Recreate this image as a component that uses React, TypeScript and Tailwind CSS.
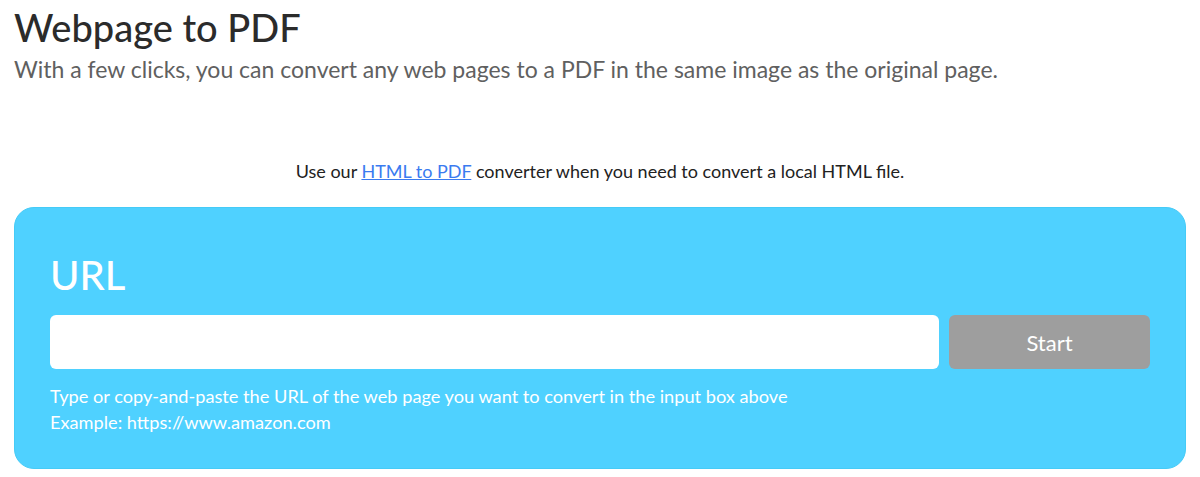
import React from 'react';

export default function App() {
  return (
    <div className="min-h-screen bg-white px-[14px] pt-[3px] pb-2 font-['Lato','Liberation_Sans',sans-serif]">
      <h1 className="text-[38px] leading-[48px] font-medium text-[#2b2b2b]">Webpage to PDF</h1>
      <p className="mt-[3px] text-[23px] leading-[30px] text-[#606060]">
        With a few clicks, you can convert any web pages to a PDF in the same image as the original page.
      </p>

      <p className="mt-[74px] text-center text-[18px] leading-[26px] text-[#222222]">
        Use our{' '}
        <a href="#" className="text-[#3a7bf0] underline">
          HTML to PDF
        </a>{' '}
        converter when you need to convert a local HTML file.
      </p>

      <div className="mt-[23px] h-[262px] rounded-[20px] border border-[#45cbf7] bg-[#4fd1ff] px-[35px] pt-[41px]">
        <h2 className="text-[40px] leading-[52px] font-medium text-white">URL</h2>
        <div className="mt-[14px] flex gap-[10px]">
          <input
            type="text"
            className="h-[54px] flex-1 rounded-[6px] bg-white px-3 text-[18px] text-[#222] outline-none"
          />
          <button className="h-[54px] w-[201px] rounded-[6px] bg-[#9e9e9e] text-[22px] text-white">
            Start
          </button>
        </div>
        <p className="mt-[14px] text-[18.2px] leading-[26px] text-white">
          Type or copy-and-paste the URL of the web page you want to convert in the input box above
          <br />
          Example: https://www.amazon.com
        </p>
      </div>
    </div>
  );
}
